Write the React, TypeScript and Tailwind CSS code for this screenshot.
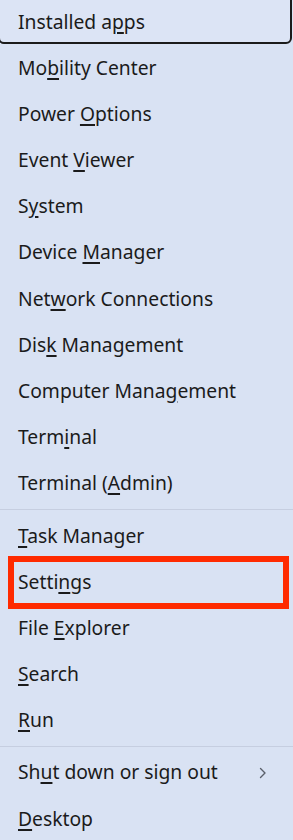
import React from 'react';

type Item = { pre: string; key: string; post: string; submenu?: boolean };

// Win+X menu entries, split around the underlined access key
const groupA: Item[] = [
  { pre: 'Installed a', key: 'p', post: 'ps' },
  { pre: 'Mo', key: 'b', post: 'ility Center' },
  { pre: 'Power ', key: 'O', post: 'ptions' },
  { pre: 'Event ', key: 'V', post: 'iewer' },
  { pre: 'S', key: 'y', post: 'stem' },
  { pre: 'Device ', key: 'M', post: 'anager' },
  { pre: 'Net', key: 'w', post: 'ork Connections' },
  { pre: 'Dis', key: 'k', post: ' Management' },
  { pre: 'Computer Mana', key: 'g', post: 'ement' },
  { pre: 'Term', key: 'i', post: 'nal' },
  { pre: 'Terminal (', key: 'A', post: 'dmin)' },
];

const groupB: Item[] = [
  { pre: '', key: 'T', post: 'ask Manager' },
  { pre: 'Setti', key: 'n', post: 'gs' },
  { pre: 'File ', key: 'E', post: 'xplorer' },
  { pre: '', key: 'S', post: 'earch' },
  { pre: '', key: 'R', post: 'un' },
];

const groupC: Item[] = [
  { pre: 'Sh', key: 'u', post: 't down or sign out', submenu: true },
  { pre: '', key: 'D', post: 'esktop' },
];

const Label: React.FC<{ item: Item }> = ({ item }) => (
  <span className="whitespace-pre">
    {item.pre}
    <span className="underline decoration-[1.5px] underline-offset-[3px]">{item.key}</span>
    {item.post}
  </span>
);

const Row: React.FC<{ item: Item; focused?: boolean; boxed?: boolean }> = ({ item, focused, boxed }) => (
  <div className={`relative flex items-center pl-[18px] pr-[26px] ${focused ? 'h-[44px] mb-[1px]' : 'h-[46.2px]'}`}>
    {focused && (
      <div className="absolute -left-[2px] right-[1px] -top-[6px] bottom-[0px] rounded-[6px] border-2 border-[#1b1b1b] bg-[#dce4f5]" />
    )}
    {boxed && (
      <div className="absolute left-[8px] right-[4px] top-[-3px] bottom-[-4px] border-[6px] border-[#ff2a00]" />
    )}
    <span className="relative flex-1">
      <Label item={item} />
    </span>
    {item.submenu && (
      <svg className="relative" width="8" height="12" viewBox="0 0 8 12" fill="none">
        <path d="M1.5 1.5 L6 6 L1.5 10.5" stroke="#5a5f6a" strokeWidth="1.4" strokeLinecap="round" strokeLinejoin="round" />
      </svg>
    )}
  </div>
);

const Separator = () => <div className="my-[2.5px] h-px bg-[#c6cee0]" />;

export default function App() {
  return (
    <div
      className="h-[840px] w-[293px] overflow-hidden bg-[#d9e2f3] text-[19.3px] text-[#1b1b1b]"
      style={{ fontFamily: '"Noto Sans", "Segoe UI", sans-serif' }}
    >
      {groupA.map((item, i) => (
        <Row key={item.pre + item.key} item={item} focused={i === 0} />
      ))}
      <Separator />
      {groupB.map((item) => (
        <Row key={item.pre + item.key} item={item} boxed={item.key === 'n'} />
      ))}
      <Separator />
      {groupC.map((item) => (
        <Row key={item.pre + item.key} item={item} />
      ))}
    </div>
  );
}
